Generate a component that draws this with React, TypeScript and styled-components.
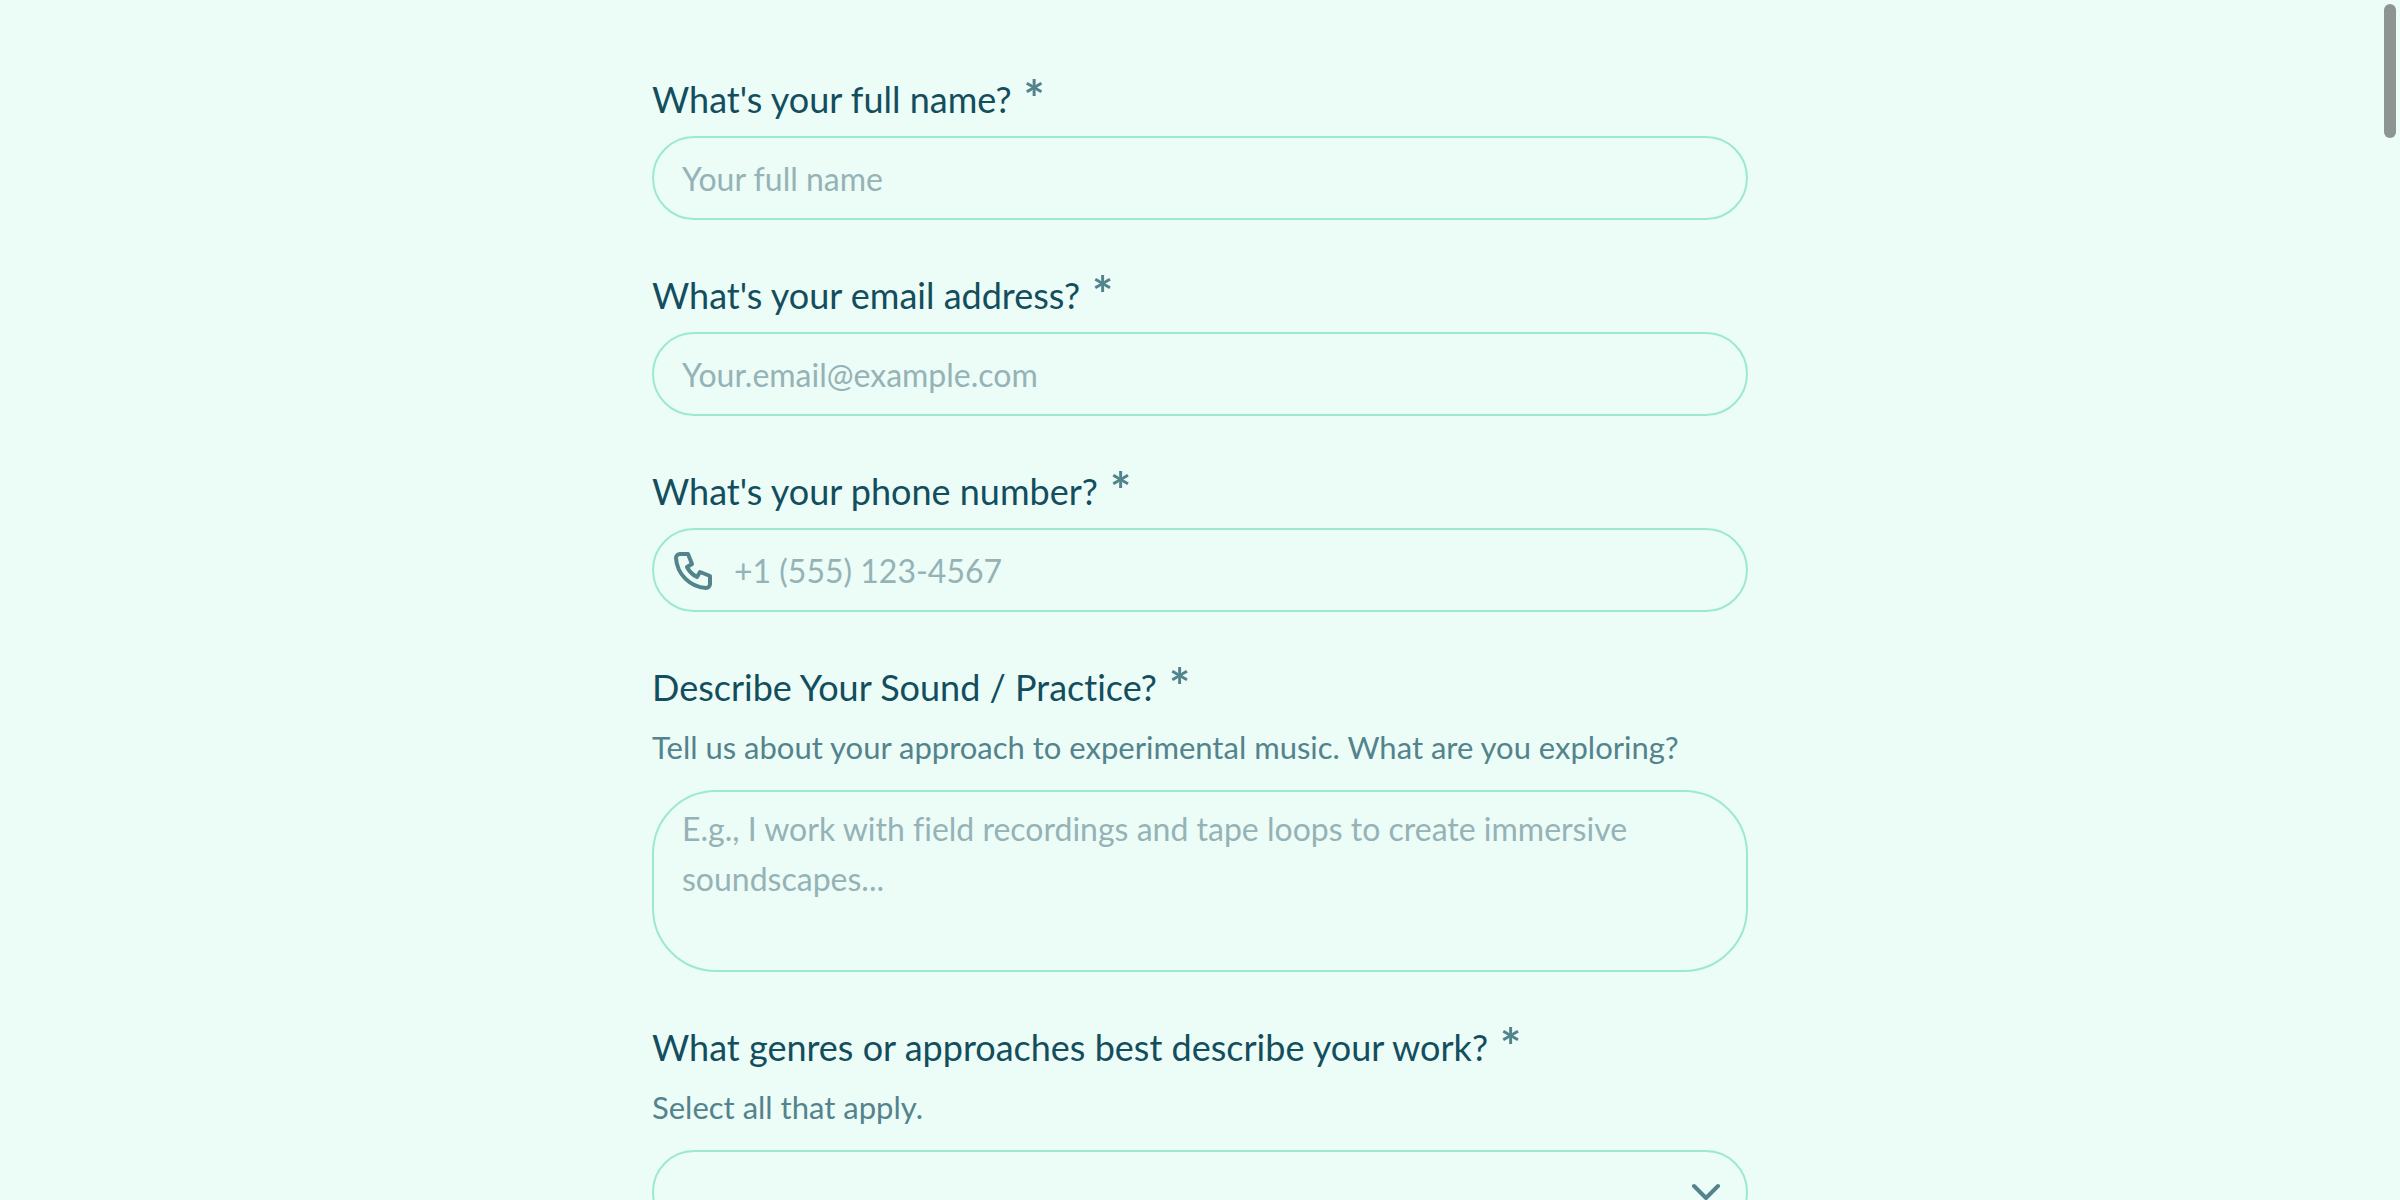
import React from "react";
import styled, { createGlobalStyle, css } from "styled-components";

const color = {
  page: "#ecfcf7",
  border: "#9de8d3",
  label: "#134e5e",
  muted: "#53838c",
  placeholder: "#95b3b6",
  thumb: "#8d9592",
};

const GlobalStyle = createGlobalStyle`
  *, *::before, *::after { box-sizing: border-box; }
  body {
    margin: 0;
    background: ${color.page};
    font-family: Lato, "Liberation Sans", sans-serif;
    font-variant-ligatures: none;
  }
`;

const Scroller = styled.main`
  height: 100vh;
  overflow-y: auto;
  scrollbar-width: none;
`;

const ScrollThumb = styled.div`
  position: fixed;
  top: 4px;
  right: 4px;
  width: 12px;
  height: 134px;
  border-radius: 6px;
  background: ${color.thumb};
`;

const Form = styled.form`
  display: flex;
  flex-direction: column;
  gap: 51px;
  width: 100%;
  max-width: 1144px;
  margin: 0 auto;
  padding: 75px 24px;
`;

const Field = styled.div`
  display: flex;
  flex-direction: column;
`;

const Label = styled.label`
  display: flex;
  gap: 12px;
  margin-bottom: 13px;
  color: ${color.label};
  font-size: 36px;
  line-height: 48px;
`;

const Required = styled.span`
  color: ${color.muted};
  font-weight: 700;
  font-size: 50px;
  line-height: 46px;
`;

const Hint = styled.p`
  margin: 0 0 20px;
  color: ${color.muted};
  font-size: 31px;
  line-height: 46px;
`;

const Control = styled.div`
  position: relative;
  display: flex;
`;

const IconSlot = styled.span<{ $side: "left" | "right" }>`
  position: absolute;
  top: 18px;
  ${(p) => p.$side}: 18px;
  display: flex;
  color: ${color.muted};
  pointer-events: none;
`;

const box = css`
  width: 100%;
  margin: 0;
  border: 2px solid ${color.border};
  background: transparent;
  color: ${color.label};
  font-family: inherit;
  font-size: 32px;
  font-variant-ligatures: none;
  outline: none;

  &::placeholder {
    color: ${color.placeholder};
    opacity: 1;
  }
`;

const Input = styled.input<{ $withIcon?: boolean }>`
  ${box}
  height: 84px;
  padding: 0 28px 0 ${(p) => (p.$withIcon ? 80 : 28)}px;
  border-radius: 42px;
`;

const TextArea = styled.textarea`
  ${box}
  height: 182px;
  padding: 12px 28px;
  border-radius: 64px;
  line-height: 50px;
  resize: none;
`;

const Select = styled.select`
  ${box}
  height: 84px;
  padding: 0 80px 0 28px;
  border-radius: 42px;
  appearance: none;
`;

function Icon({ d }: { d: string }) {
  return (
    <svg
      width="48"
      height="48"
      viewBox="0 0 24 24"
      fill="none"
      stroke="currentColor"
      strokeWidth="2"
      strokeLinecap="round"
      strokeLinejoin="round"
      aria-hidden="true"
    >
      <path d={d} />
    </svg>
  );
}

const phonePath =
  "M5 4h4l2 5l-2.5 1.5a11 11 0 0 0 5 5l1.5 -2.5l5 2v4a2 2 0 0 1 -2 2a16 16 0 0 1 -15 -15a2 2 0 0 1 2 -2";
const chevronPath = "M6 9l6 6l6 -6";

interface QuestionProps {
  id: string;
  label: string;
  hint?: string;
  children: React.ReactNode;
}

function Question({ id, label, hint, children }: QuestionProps) {
  return (
    <Field>
      <Label htmlFor={id}>
        {label}
        <Required>*</Required>
      </Label>
      {hint && <Hint id={`${id}-hint`}>{hint}</Hint>}
      <Control>{children}</Control>
    </Field>
  );
}

export default function App() {
  return (
    <>
      <GlobalStyle />
      <Scroller>
        <Form>
          <Question id="name" label="What's your full name?">
            <Input id="name" type="text" placeholder="Your full name" required />
          </Question>
          <Question id="email" label="What's your email address?">
            <Input id="email" type="email" placeholder="Your.email@example.com" required />
          </Question>
          <Question id="phone" label="What's your phone number?">
            <IconSlot $side="left">
              <Icon d={phonePath} />
            </IconSlot>
            <Input id="phone" type="tel" placeholder="+1 (555) 123-4567" $withIcon required />
          </Question>
          <Question
            id="practice"
            label="Describe Your Sound / Practice?"
            hint="Tell us about your approach to experimental music. What are you exploring?"
          >
            <TextArea
              id="practice"
              aria-describedby="practice-hint"
              placeholder="E.g., I work with field recordings and tape loops to create immersive soundscapes..."
              required
            />
          </Question>
          <Question
            id="genres"
            label="What genres or approaches best describe your work?"
            hint="Select all that apply."
          >
            <Select id="genres" aria-describedby="genres-hint" defaultValue="" required>
              <option value="" />
            </Select>
            <IconSlot $side="right">
              <Icon d={chevronPath} />
            </IconSlot>
          </Question>
        </Form>
      </Scroller>
      <ScrollThumb />
    </>
  );
}
